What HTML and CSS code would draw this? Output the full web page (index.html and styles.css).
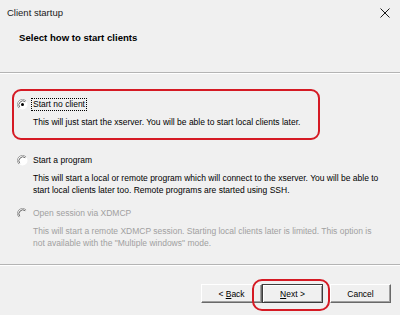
FILE: index.html
```html
<!DOCTYPE html>
<html lang="en">
<head>
  <meta charset="UTF-8" />
  <title>Client startup</title>
  <link rel="stylesheet" href="styles.css">
</head>
<body>
  <div class="dialog">
    <div class="titlebar">
      <span class="title">Client startup</span>
      <svg class="close" width="10" height="10" viewBox="0 0 10 10">
        <path d="M0.5 0.5 L9.5 9.5 M9.5 0.5 L0.5 9.5" stroke="#1a1a1a" stroke-width="1" fill="none"/>
      </svg>
    </div>

    <div class="header">
      <h1>Select how to start clients</h1>
    </div>

    <div class="options">
      <div class="option marked">
        <div class="option-label">
          <svg class="radio" width="11" height="11" viewBox="0 0 11 11">
            <circle cx="5.5" cy="5.5" r="5" fill="#fff"/>
            <path d="M1.9 9.1 A5 5 0 0 1 9.1 1.9" stroke="#a0a0a0" fill="none"/>
            <path d="M2.7 8.3 A4 4 0 0 1 8.3 2.7" stroke="#696969" fill="none"/>
            <circle cx="5.5" cy="5.5" r="1.5" fill="#000"/>
          </svg>
          <span class="focus">Start no client</span>
        </div>
        <p class="option-desc">This will just start the xserver. You will be able to start local clients later.</p>
      </div>

      <div class="option">
        <div class="option-label">
          <svg class="radio" width="11" height="11" viewBox="0 0 11 11">
            <circle cx="5.5" cy="5.5" r="5" fill="#fff"/>
            <path d="M1.9 9.1 A5 5 0 0 1 9.1 1.9" stroke="#a0a0a0" fill="none"/>
            <path d="M2.7 8.3 A4 4 0 0 1 8.3 2.7" stroke="#696969" fill="none"/>
          </svg>
          <span>Start a program</span>
        </div>
        <p class="option-desc">This will start a local or remote program which will connect to the xserver. You will be able to start local clients later too. Remote programs are started using SSH.</p>
      </div>

      <div class="option disabled">
        <div class="option-label">
          <svg class="radio" width="11" height="11" viewBox="0 0 11 11">
            <circle cx="5.5" cy="5.5" r="5" fill="#f0f0f0"/>
            <path d="M1.9 9.1 A5 5 0 0 1 9.1 1.9" stroke="#a0a0a0" fill="none"/>
            <path d="M2.7 8.3 A4 4 0 0 1 8.3 2.7" stroke="#696969" fill="none"/>
          </svg>
          <span>Open session via XDMCP</span>
        </div>
        <p class="option-desc">This will start a remote XDMCP session. Starting local clients later is limited. This option is not available with the "Multiple windows" mode.</p>
      </div>
    </div>

    <div class="footer">
      <button class="btn">&lt; <u>B</u>ack</button>
      <span class="next-wrap"><button class="btn default"><u>N</u>ext &gt;</button></span>
      <button class="btn cancel">Cancel</button>
    </div>
  </div>
</body>
</html>
```

FILE: styles.css
```css
* {
  box-sizing: border-box;
  margin: 0;
  padding: 0;
}

body {
  background: #f0f0f0;
  font-family: 'Liberation Sans', Arial, sans-serif;
  font-size: 8.5px;
  color: #000;
  width: 400px;
  height: 315px;
  overflow: hidden;
}

.dialog {
  width: 400px;
  height: 315px;
  display: flex;
  flex-direction: column;
}

.titlebar {
  height: 25px;
  display: flex;
  align-items: center;
  justify-content: space-between;
  padding: 0 10px 0 7px;
}

.title {
  font-size: 9.5px;
  color: #1a1a1a;
}

.header {
  height: 48px;
  padding: 7px 0 0 19px;
  border-bottom: 1px solid #b4b4b4;
  box-shadow: 0 1px 0 #fff;
}

h1 {
  font-size: 9.6px;
  font-weight: bold;
  line-height: 12px;
}

.options {
  display: flex;
  flex-direction: column;
  padding-top: 16px;
}

.option {
  padding-left: 17px;
  margin-top: 11px;
}

.option.marked {
  margin: 0 0 3px 12px;
  width: 308px;
  padding: 7px 0 10px 3px;
  border: 2px solid #d51a24;
  border-radius: 9px;
}

.option-label {
  display: flex;
  align-items: center;
  height: 12px;
  line-height: 12px;
}

.radio {
  flex: none;
  margin-right: 5px;
}

.focus {
  border: 1px dotted #000;
  padding: 0 1px;
  margin-left: -2px;
  line-height: 11px;
}

.option-desc {
  margin-top: 6px;
  padding-left: 16px;
  line-height: 12px;
  padding-right: 18px;
}

.option.marked .option-desc {
  padding-right: 0;
}

.disabled {
  color: #a0a0a0;
}

.footer {
  margin-top: 15px;
  border-top: 1px solid #b4b4b4;
  box-shadow: inset 0 1px 0 #fff;
  display: flex;
  justify-content: flex-end;
  padding: 19px 9px 0 0;
}

.btn {
  width: 61px;
  height: 19px;
  font-family: 'Liberation Sans', Arial, sans-serif;
  font-size: 8.5px;
  color: #000;
  background: #f0f0f0;
  border: 1px solid;
  border-color: #fff #696969 #696969 #fff;
  box-shadow: inset -1px -1px 0 #a0a0a0;
}

.btn.default {
  border-color: #3c3c3c;
  box-shadow: inset 1px 1px 0 #fff, inset -1px -1px 0 #a0a0a0;
}

.next-wrap {
  position: relative;
  display: flex;
}

.next-wrap::after {
  content: '';
  position: absolute;
  top: -5px;
  bottom: -8px;
  left: -10px;
  right: -7px;
  border: 2px solid #d51a24;
  border-radius: 10px;
}

.cancel {
  margin-left: 7px;
}
```
